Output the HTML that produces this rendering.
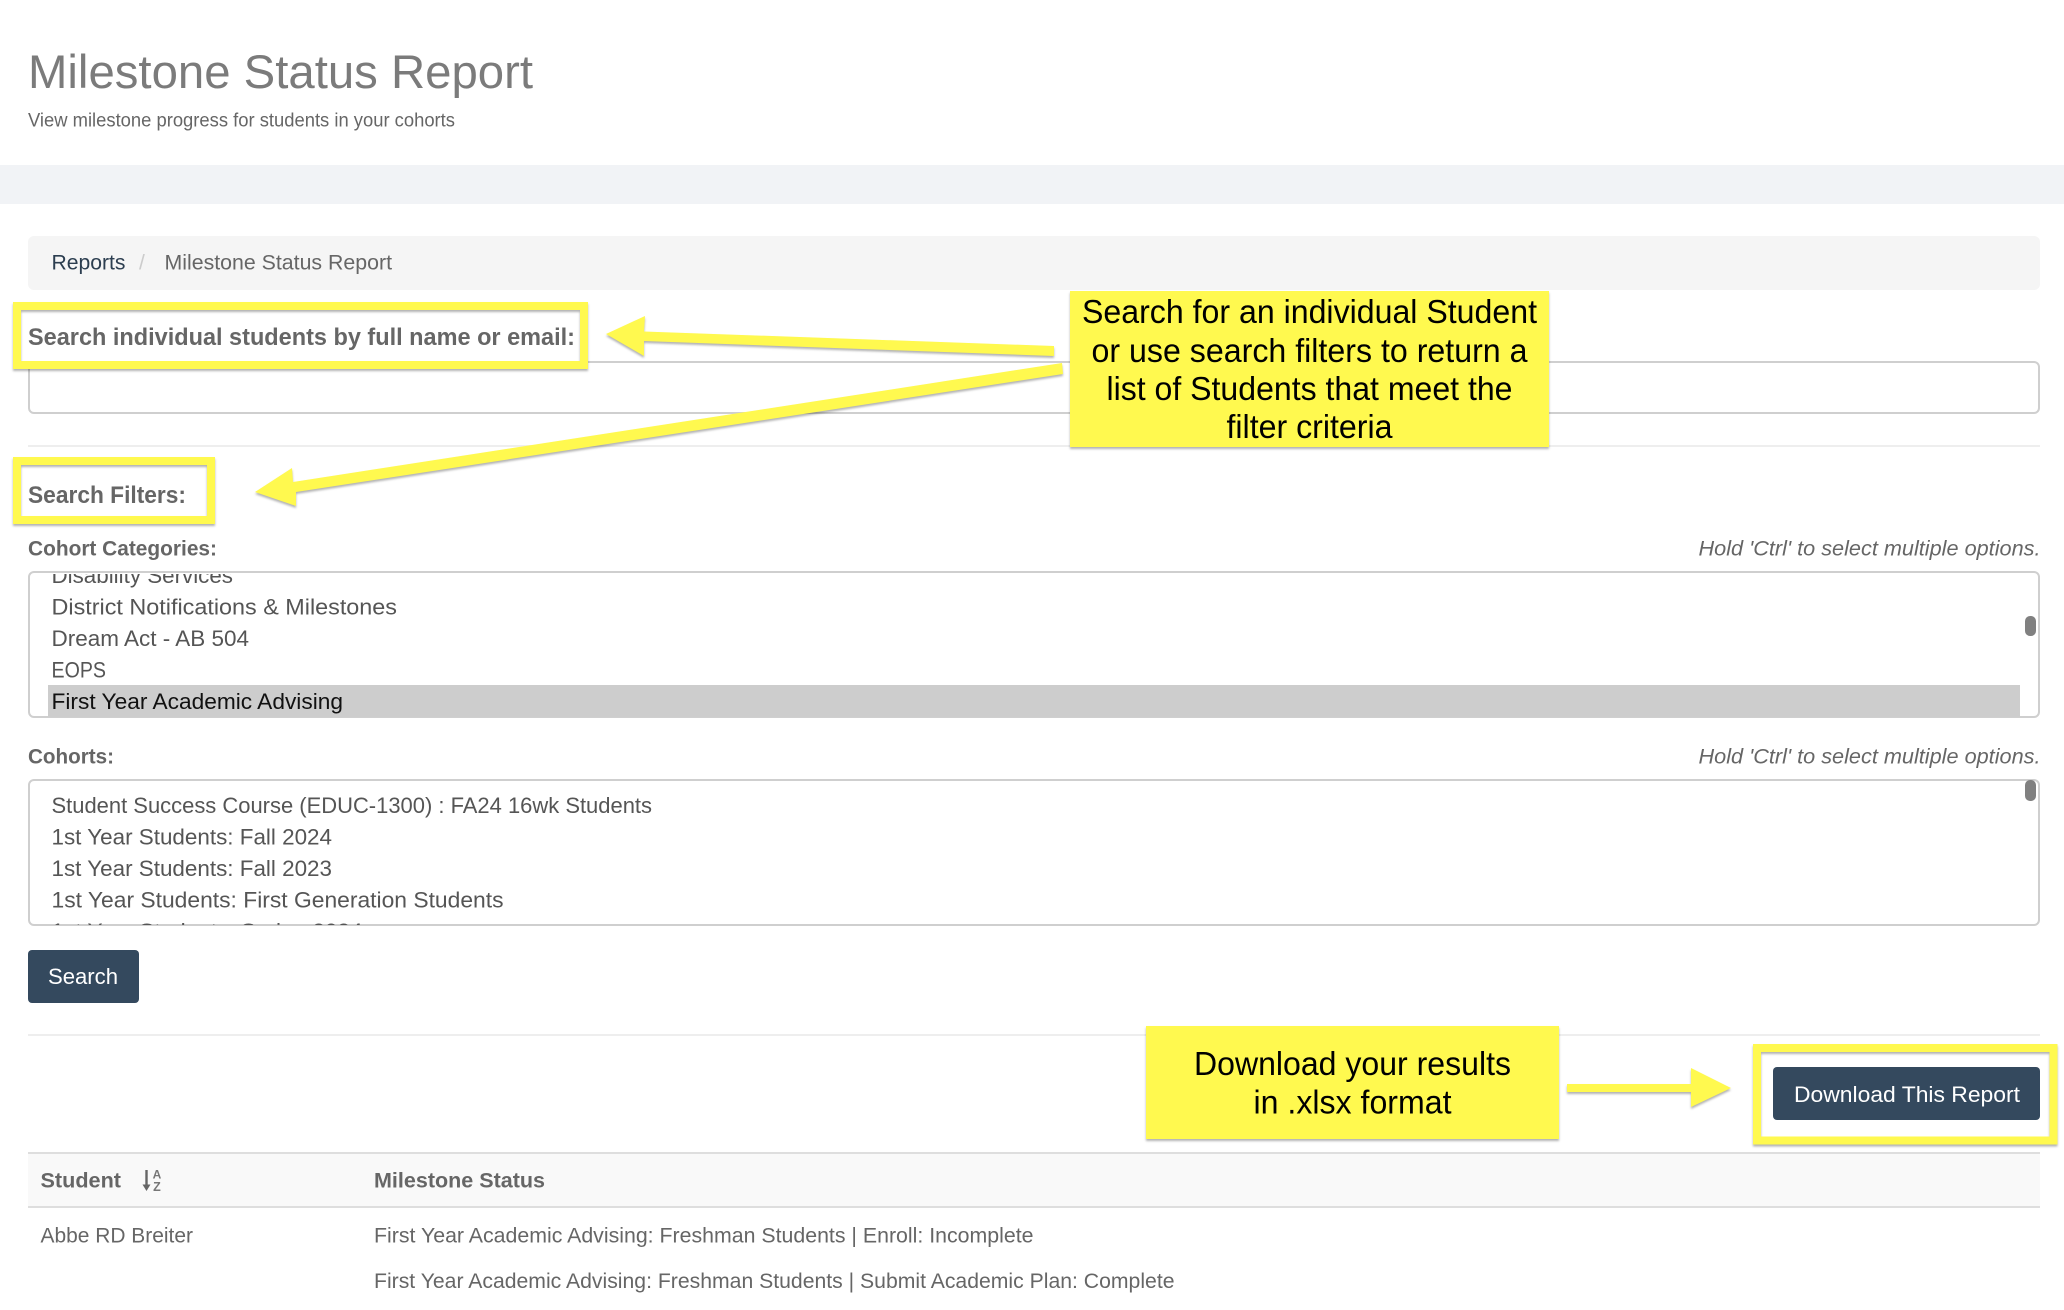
<!DOCTYPE html>
<html lang="en"><head><meta charset="utf-8"><title>Milestone Status Report</title>
<style>
html,body{margin:0;padding:0;background:#fff;width:2064px;height:1310px;overflow:hidden}
body{position:relative;font-family:"Liberation Sans",sans-serif}
.a{position:absolute;box-sizing:border-box}
.band{left:0;top:165px;width:2064px;height:39px;background:#f1f3f6}
.crumb{left:28px;top:236px;width:2012px;height:54px;background:#f5f5f5;border-radius:6px}
.field{left:28px;width:2012px;border:2px solid #cfcfcf;border-radius:6px;background:#fff}
.hr{left:28px;width:2012px;height:2px;background:#eeeeee}
.sel{left:48px;top:685px;width:1972px;height:32px;background:#cdcdcd}
.thumb{left:2025px;width:11px;background:#808080;border-radius:5px}
.btn{background:#34495e;border-radius:4px}
.th{left:28px;top:1152px;width:2012px;height:56px;background:#f9f9f9;border-top:2px solid #dedede;border-bottom:2px solid #dedede}
svg{position:absolute;left:0;top:0}
text{font-family:"Liberation Sans",sans-serif;fill:#666}
.b{font-weight:700;fill:#666}
.s{font-size:22.5px;fill:#555}
.t{font-size:21px;fill:#666}
.i{font-style:italic;font-size:21px;fill:#666}
.c{font-size:33px;fill:#000}
.w{font-size:22.5px;fill:#fff}
.y{fill:#fff94f;filter:drop-shadow(0 2px 1px rgba(0,0,0,.3))}
.box{fill:none;stroke:#fff94f;stroke-width:8;filter:drop-shadow(0 2px 1px rgba(0,0,0,.3))}
</style></head><body>
<div class="a band"></div>
<div class="a crumb"></div>
<div class="a field" style="top:361px;height:53px"></div>
<div class="a hr" style="top:445px"></div>
<div class="a field" style="top:571px;height:147px"></div>
<div class="a sel"></div>
<div class="a thumb" style="top:616px;height:20px"></div>
<div class="a field" style="top:779px;height:147px"></div>
<div class="a thumb" style="top:780px;height:21px"></div>
<div class="a btn" style="left:28px;top:950px;width:111px;height:53px"></div>
<div class="a hr" style="top:1034px"></div>
<div class="a btn" style="left:1773px;top:1067px;width:267px;height:53px"></div>
<div class="a th"></div>
<svg width="2064" height="1310" viewBox="0 0 2064 1310" xmlns="http://www.w3.org/2000/svg">
<defs>
<clipPath id="c1"><rect x="30" y="574" width="1990" height="143"/></clipPath>
<clipPath id="c2"><rect x="30" y="781" width="1990" height="144"/></clipPath>
</defs>
<text x="28" y="88" font-size="47.500" textLength="505" lengthAdjust="spacingAndGlyphs" style="fill:#7b7b7b">Milestone Status Report</text>
<text x="28" y="126.500" font-size="19" textLength="427" lengthAdjust="spacingAndGlyphs">View milestone progress for students in your cohorts</text>

<text x="51.500" y="269.500" class="t" textLength="74" lengthAdjust="spacingAndGlyphs" style="fill:#2c3e50">Reports</text>
<text x="139" y="269.500" class="t" style="fill:#ccc">/</text>
<text x="164.500" y="269.500" class="t" textLength="227.500" lengthAdjust="spacingAndGlyphs">Milestone Status Report</text>

<text x="28" y="345" class="b" font-size="24" textLength="547" lengthAdjust="spacingAndGlyphs">Search individual students by full name or email:</text>
<text x="28" y="503" class="b" font-size="24" textLength="158" lengthAdjust="spacingAndGlyphs">Search Filters:</text>
<text x="28" y="555.500" class="b" font-size="21" textLength="189" lengthAdjust="spacingAndGlyphs">Cohort Categories:</text>
<text x="1698.500" y="555.500" class="i" textLength="342" lengthAdjust="spacingAndGlyphs">Hold 'Ctrl' to select multiple options.</text>

<g clip-path="url(#c1)">
<text x="51.500" y="583" class="s" textLength="181.500" lengthAdjust="spacingAndGlyphs">Disability Services</text>
<text x="51.500" y="614.500" class="s" textLength="345.500" lengthAdjust="spacingAndGlyphs">District Notifications &amp; Milestones</text>
<text x="51.500" y="646" class="s" textLength="197.500" lengthAdjust="spacingAndGlyphs">Dream Act - AB 504</text>
<text x="51.500" y="677.500" class="s" textLength="54.500" lengthAdjust="spacingAndGlyphs">EOPS</text>
<text x="51.500" y="709" class="s" textLength="291.500" lengthAdjust="spacingAndGlyphs" style="fill:#111">First Year Academic Advising</text>
</g>

<text x="28" y="763.500" class="b" font-size="21" textLength="86" lengthAdjust="spacingAndGlyphs">Cohorts:</text>
<text x="1698.500" y="763.500" class="i" textLength="342" lengthAdjust="spacingAndGlyphs">Hold 'Ctrl' to select multiple options.</text>

<g clip-path="url(#c2)">
<text x="51.500" y="813" class="s" textLength="600.500" lengthAdjust="spacingAndGlyphs">Student Success Course (EDUC-1300) : FA24 16wk Students</text>
<text x="51.500" y="844.500" class="s" textLength="280.500" lengthAdjust="spacingAndGlyphs">1st Year Students: Fall 2024</text>
<text x="51.500" y="876" class="s" textLength="280.500" lengthAdjust="spacingAndGlyphs">1st Year Students: Fall 2023</text>
<text x="51.500" y="907.500" class="s" textLength="452" lengthAdjust="spacingAndGlyphs">1st Year Students: First Generation Students</text>
<text x="51.500" y="939" class="s" textLength="311" lengthAdjust="spacingAndGlyphs">1st Year Students: Spring 2024</text>
</g>

<text x="48" y="984" class="w" textLength="70" lengthAdjust="spacingAndGlyphs">Search</text>
<text x="1794" y="1102" class="w" textLength="226" lengthAdjust="spacingAndGlyphs">Download This Report</text>

<text x="40.500" y="1187.500" class="b" font-size="21" textLength="80.500" lengthAdjust="spacingAndGlyphs">Student</text>
<path d="M146.500 1170V1187" stroke="#666" stroke-width="2.400" fill="none"/>
<path d="M142.500 1184.500H150.500L146.500 1191Z" fill="#666"/>
<text x="157" y="1178.500" font-size="12" font-weight="700" text-anchor="middle" style="fill:#777">A</text>
<text x="157" y="1191" font-size="12.500" font-weight="700" text-anchor="middle" style="fill:#777">Z</text>
<text x="374" y="1187.500" class="b" font-size="21" textLength="171" lengthAdjust="spacingAndGlyphs">Milestone Status</text>

<text x="40.500" y="1242.500" class="t" textLength="152.500" lengthAdjust="spacingAndGlyphs">Abbe RD Breiter</text>
<text x="374" y="1242.500" class="t" textLength="659.500" lengthAdjust="spacingAndGlyphs">First Year Academic Advising: Freshman Students | Enroll: Incomplete</text>
<text x="374" y="1288" class="t" textLength="800.500" lengthAdjust="spacingAndGlyphs">First Year Academic Advising: Freshman Students | Submit Academic Plan: Complete</text>

<rect class="box" x="17" y="306" width="567" height="59"/>
<rect class="box" x="17" y="461" width="194" height="59"/>
<rect class="box" x="1757" y="1048" width="296.500" height="92.500"/>

<polygon class="y" points="606,334 645,316 644,331.500 1054,346 1054,356 644,341 644,356"/>
<polygon class="y" points="255,492 292,468 293,482 1062,363 1063,374 296,492 296,506"/>
<polygon class="y" points="1567,1084 1691,1084 1691,1068 1731,1088 1691,1107 1691,1092 1567,1092"/>

<rect class="y" x="1070" y="291" width="479" height="156"/>
<text x="1309.500" y="323" class="c" text-anchor="middle" textLength="455" lengthAdjust="spacingAndGlyphs">Search for an individual Student</text>
<text x="1309.500" y="362" class="c" text-anchor="middle" textLength="436" lengthAdjust="spacingAndGlyphs">or use search filters to return a</text>
<text x="1309.500" y="400" class="c" text-anchor="middle" textLength="406" lengthAdjust="spacingAndGlyphs">list of Students that meet the</text>
<text x="1309.500" y="438" class="c" text-anchor="middle" textLength="166" lengthAdjust="spacingAndGlyphs">filter criteria</text>

<rect class="y" x="1146" y="1026" width="413" height="113"/>
<text x="1352.500" y="1075" class="c" text-anchor="middle" textLength="317" lengthAdjust="spacingAndGlyphs">Download your results</text>
<text x="1352.500" y="1113.500" class="c" text-anchor="middle" textLength="198" lengthAdjust="spacingAndGlyphs">in .xlsx format</text>
</svg>
</body></html>
